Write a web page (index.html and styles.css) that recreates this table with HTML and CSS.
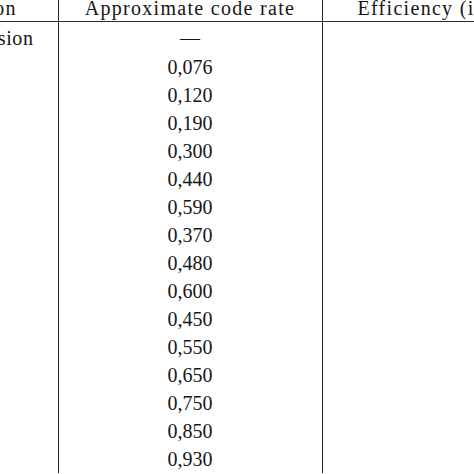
FILE: index.html
```html
<!DOCTYPE html>
<html lang="en">
<head>
<meta charset="utf-8">
<title>CQI table</title>
<link rel="stylesheet" href="styles.css">
</head>
<body>
<table class="cqi">
  <colgroup>
    <col class="c-mod">
    <col class="c-rate">
    <col class="c-eff">
  </colgroup>
  <thead>
    <tr>
      <th class="mod">Modulation</th>
      <th class="rate">Approximate code rate</th>
      <th class="eff">Efficiency (information bits per symbol)</th>
    </tr>
  </thead>
  <tbody>
    <tr class="first"><td class="mod">No transmission</td><td class="rate">—</td><td class="eff"></td></tr>
    <tr><td class="mod"></td><td class="rate">0,076</td><td class="eff"></td></tr>
    <tr><td class="mod"></td><td class="rate">0,120</td><td class="eff"></td></tr>
    <tr><td class="mod"></td><td class="rate">0,190</td><td class="eff"></td></tr>
    <tr><td class="mod"></td><td class="rate">0,300</td><td class="eff"></td></tr>
    <tr><td class="mod"></td><td class="rate">0,440</td><td class="eff"></td></tr>
    <tr><td class="mod"></td><td class="rate">0,590</td><td class="eff"></td></tr>
    <tr><td class="mod"></td><td class="rate">0,370</td><td class="eff"></td></tr>
    <tr><td class="mod"></td><td class="rate">0,480</td><td class="eff"></td></tr>
    <tr><td class="mod"></td><td class="rate">0,600</td><td class="eff"></td></tr>
    <tr><td class="mod"></td><td class="rate">0,450</td><td class="eff"></td></tr>
    <tr><td class="mod"></td><td class="rate">0,550</td><td class="eff"></td></tr>
    <tr><td class="mod"></td><td class="rate">0,650</td><td class="eff"></td></tr>
    <tr><td class="mod"></td><td class="rate">0,750</td><td class="eff"></td></tr>
    <tr><td class="mod"></td><td class="rate">0,850</td><td class="eff"></td></tr>
    <tr><td class="mod"></td><td class="rate">0,930</td><td class="eff"></td></tr>
  </tbody>
</table>
</body>
</html>
```

FILE: styles.css
```css
html, body {
  margin: 0;
  padding: 0;
  overflow: hidden;
  background: #ffffff;
}

body {
  width: 474px;
  height: 474px;
}

.cqi {
  border-collapse: collapse;
  table-layout: fixed;
  width: 852px;
  margin-left: -130px;
  margin-top: -4px;
  font-family: "Liberation Serif", "Times New Roman", serif;
  font-size: 20px;
  color: #161616;
}

.c-mod { width: 188px; }
.c-rate { width: 264px; }
.c-eff { width: 400px; }

.cqi th,
.cqi td {
  padding: 0;
  font-weight: normal;
  white-space: nowrap;
  overflow: hidden;
}

.cqi th {
  height: 25px;
  line-height: 25px;
  letter-spacing: 1.3px;
  border-bottom: 1.5px solid #2b2b2b;
}

.cqi td {
  height: 28px;
  line-height: 28px;
}

.cqi tr.first td {
  height: 31px;
  line-height: 30px;
}

.mod,
.rate {
  text-align: center;
  border-right: 1.5px solid #2b2b2b;
}

.cqi td.mod {
  letter-spacing: 0.6px;
}

.eff {
  text-align: left;
  padding-left: 36px;
}

.cqi th.eff {
  padding-left: 35px;
}
```
